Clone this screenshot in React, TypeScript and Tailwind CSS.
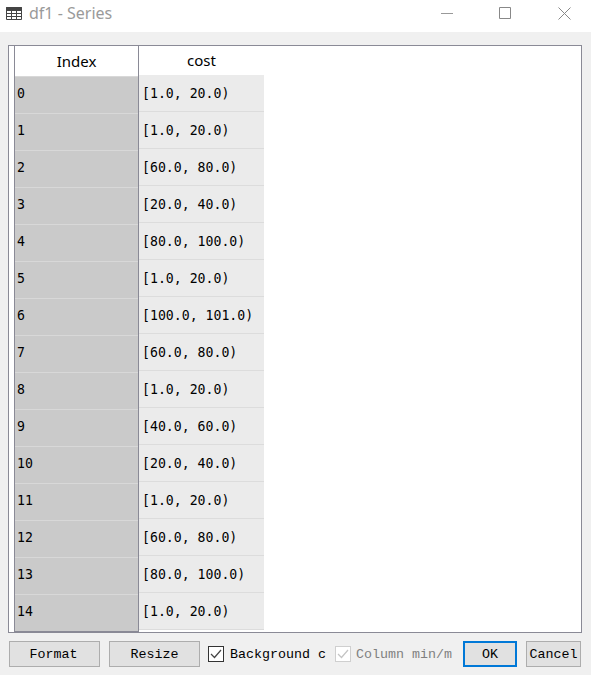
import React from 'react';

const rows = [
  '[1.0, 20.0)',
  '[1.0, 20.0)',
  '[60.0, 80.0)',
  '[20.0, 40.0)',
  '[80.0, 100.0)',
  '[1.0, 20.0)',
  '[100.0, 101.0)',
  '[60.0, 80.0)',
  '[1.0, 20.0)',
  '[40.0, 60.0)',
  '[20.0, 40.0)',
  '[1.0, 20.0)',
  '[60.0, 80.0)',
  '[80.0, 100.0)',
  '[1.0, 20.0)',
];

function Check({ color }: { color: string }) {
  return (
    <svg className="w-[14px] h-[14px]" viewBox="0 0 14 14" fill="none" stroke={color} strokeWidth={1.2}>
      <path d="M2 7l3.5 3.5L12 3" />
    </svg>
  );
}

function TitleBar() {
  return (
    <div className="h-[32px] bg-white flex items-center shrink-0 pb-[6px]">
      <svg className="ml-[6px] w-[16px] h-[14px]" viewBox="0 0 16 14" fill="none" stroke="#444" strokeWidth={1}>
        <path d="M0.5 1.5h15v12h-15z" />
        <path d="M0.5 1.5h15v3h-15z" fill="#444" />
        <path d="M0.5 7.5h15M0.5 10.5h15M5.5 4v9.5M10.5 4v9.5" />
      </svg>
      <span className="ml-[7px] text-[16px] text-[#9a9a9a] font-['Noto_Sans',sans-serif]">df1 - Series</span>
      <div className="ml-auto flex items-center">
        <svg className="w-[12px] h-[12px] mr-[46px]" viewBox="0 0 12 12" stroke="#999" fill="none">
          <path d="M0 6.5h12" />
        </svg>
        <svg className="w-[12px] h-[12px] mr-[47px]" viewBox="0 0 12 12" stroke="#888" fill="none">
          <path d="M0.5 0.5h11v11h-11z" />
        </svg>
        <svg className="w-[13px] h-[13px] mr-[20px]" viewBox="0 0 13 13" stroke="#888" fill="none">
          <path d="M0.5 0.5l12 12M12.5 0.5l-12 12" />
        </svg>
      </div>
    </div>
  );
}

function Table() {
  return (
    <div className="ml-[8px] mr-[9px] mt-[13px] h-[588px] border border-[#8a8a96] bg-white flex items-start pl-[5px] overflow-hidden">
      <div className="w-[125px] border border-t-0 border-[#8a8a96] shrink-0">
        <div className="h-[30px] flex items-center justify-center text-[15px] text-black font-['Noto_Sans',sans-serif]">
          Index
        </div>
        {rows.map((_, i) => (
          <div
            key={i}
            className="h-[37px] bg-[#cacaca] border-t border-[#d8d8d8] first:border-t-0 flex items-center pl-[2px] pb-[2px] text-[13.2px] text-black font-['DejaVu_Sans_Mono',monospace]"
          >
            {i}
          </div>
        ))}
      </div>
      <div className="w-[125px] shrink-0">
        <div className="h-[29px] flex items-center justify-center text-[15px] text-black font-['Noto_Sans',sans-serif]">
          cost
        </div>
        {rows.map((r, i) => (
          <div
            key={i}
            className="h-[37px] bg-[#ebebeb] border-b border-[#dcdcdc] flex items-center pl-[3px] pt-[2px] text-[13.2px] text-black font-['DejaVu_Sans_Mono',monospace] whitespace-pre"
          >
            {r}
          </div>
        ))}
      </div>
    </div>
  );
}

function Button({ label, className }: { label: string; className: string }) {
  return (
    <div className={`h-[26px] pt-[2px] flex items-center justify-center bg-[#e1e1e1] text-[13.33px] text-black ${className}`}>
      {label}
    </div>
  );
}

function Footer() {
  return (
    <div className="flex items-center ml-[9px] mt-[8px] font-['Liberation_Mono',monospace] text-[13.33px]">
      <Button label="Format" className="w-[91px] pr-[2px] border border-[#adadad]" />
      <Button label="Resize" className="w-[91px] ml-[9px] border border-[#adadad]" />
      <div className="ml-[8px] w-[16px] h-[16px] border border-[#333] bg-white flex items-center justify-center">
        <Check color="#444" />
      </div>
      <span className="ml-[6px] w-[96px] pt-[2px] whitespace-pre text-black">Background c</span>
      <div className="ml-[9px] w-[16px] h-[16px] border border-[#cfcfcf] bg-white flex items-center justify-center">
        <Check color="#c4c4c4" />
      </div>
      <span className="ml-[5px] w-[97px] pt-[2px] whitespace-pre text-[#808080]">Column min/m</span>
      <Button label="OK" className="w-[54px] ml-[10px] border-2 border-[#0078d7]" />
      <Button label="Cancel" className="w-[55px] ml-[9px] border border-[#adadad]" />
    </div>
  );
}

export default function App() {
  return (
    <div className="w-[591px] h-[675px] bg-[#f0f0f0] flex flex-col overflow-hidden">
      <TitleBar />
      <Table />
      <Footer />
    </div>
  );
}
